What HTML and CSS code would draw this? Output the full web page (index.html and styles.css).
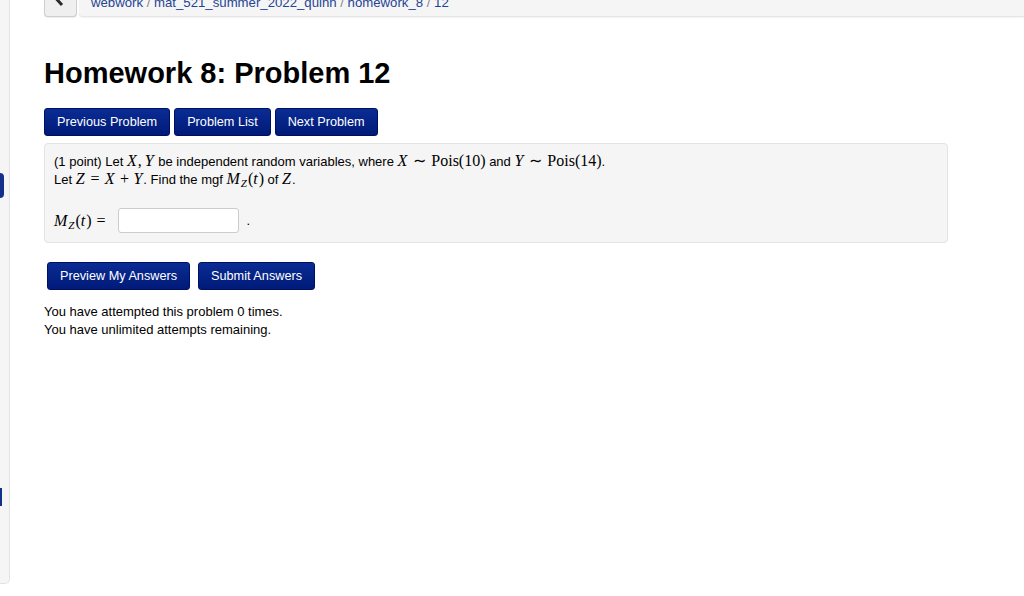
FILE: index.html
```html
<!DOCTYPE html>
<html>
<head>
<meta charset="utf-8">
<link rel="stylesheet" href="styles.css">
</head>
<body>
<div class="page">
  <aside class="sidebar">
    <span class="side-pill"></span>
    <span class="side-bar"></span>
  </aside>
  <main class="main">
    <div class="topbar">
      <div class="back">
        <svg class="chev" width="31" height="37" viewBox="0 0 31 37"><polyline points="16,6 8,15 16,24" fill="none" stroke="#2b2b2b" stroke-width="3" stroke-linecap="square"/></svg>
      </div>
      <nav class="crumbs">
        <a>webwork</a> / <a>mat_521_summer_2022_quinn</a> / <a>homework_8</a> / <a>12</a>
      </nav>
    </div>
    <h1 class="title">Homework 8: Problem 12</h1>
    <div class="navbtns">
      <button class="btn">Previous Problem</button>
      <button class="btn">Problem List</button>
      <button class="btn">Next Problem</button>
    </div>
    <div class="problem">
      <p class="line">(1 point) Let <span class="m"><i>X</i>,<span class="thin"></span><i>Y</i></span> be independent random variables, where <span class="m"><i>X</i><span class="rel">∼</span>Pois(10)</span> and <span class="m"><i>Y</i><span class="rel">∼</span>Pois(14)</span>.</p>
      <p class="line">Let <span class="m"><i>Z</i><span class="rel">=</span><i>X</i><span class="bin">+</span><i>Y</i></span>. Find the mgf <span class="m"><i>M</i><sub><i>Z</i></sub>(<i>t</i>)</span> of <span class="m"><i>Z</i></span>.</p>
      <div class="answer">
        <span class="m"><i>M</i><sub><i>Z</i></sub>(<i>t</i>)<span class="rel">=</span></span>
        <input class="field" type="text">
        <span class="dot">.</span>
      </div>
    </div>
    <div class="submitbtns">
      <button class="btn">Preview My Answers</button>
      <button class="btn">Submit Answers</button>
    </div>
    <p class="info">You have attempted this problem 0 times.<br>You have unlimited attempts remaining.</p>
  </main>
</div>
</body>
</html>
```
FILE: styles.css
```css
html, body {
  margin: 0;
  padding: 0;
  background: #fff;
  font-family: "Liberation Sans", Arial, sans-serif;
  color: #000;
  overflow: hidden;
}
.page {
  display: flex;
  align-items: flex-start;
}
.sidebar {
  position: relative;
  width: 9px;
  height: 583px;
  flex: none;
  background: #f5f5f5;
  border-right: 1px solid #e3e3e3;
  border-bottom: 1px solid #e3e3e3;
  border-bottom-right-radius: 5px;
}
.side-pill {
  position: absolute;
  left: 0;
  top: 173px;
  width: 4px;
  height: 25px;
  background: #13318b;
  border-radius: 0 12px 12px 0;
}
.side-bar {
  position: absolute;
  left: 0;
  top: 488px;
  width: 2px;
  height: 18px;
  background: #13318b;
}
.main {
  flex: 1;
  padding-left: 34px;
}
.topbar {
  display: flex;
  margin-top: -20px;
  height: 37px;
}
.back {
  width: 31px;
  flex: none;
  background: #efefef;
  border: 1px solid #cfcfcf;
  border-top: none;
  border-radius: 0 0 4px 4px;
  box-shadow: 0 1px 1px rgba(0,0,0,0.08);
  overflow: hidden;
}
.chev {
  display: block;
}
.crumbs {
  flex: 1;
  margin-left: 2px;
  background: #f5f5f5;
  border-bottom: 1px solid #e6e6e6;
  box-shadow: 0 1px 2px rgba(0,0,0,0.06);
  border-radius: 0 0 0 4px;
  padding-left: 12px;
  font-size: 13.2px;
  line-height: 13px;
  padding-top: 16px;
  color: #888;
  white-space: nowrap;
}
.crumbs a {
  color: #1f4493;
}
.title {
  margin: 39px 0 0 0;
  font-size: 29px;
  line-height: 34px;
  font-weight: bold;
}
.navbtns {
  display: flex;
  gap: 4px;
  margin-top: 18px;
}
.btn {
  height: 28px;
  padding: 0 12px;
  font-family: "Liberation Sans", Arial, sans-serif;
  font-size: 12.7px;
  color: #fff;
  background: linear-gradient(#0a2c94, #001a78);
  border: 1px solid #001060;
  border-radius: 3px;
}
.problem {
  margin-top: 7px;
  margin-right: 76px;
  background: #f5f5f5;
  border: 1px solid #e3e3e3;
  border-radius: 4px;
  padding: 8px 9px 9px 9px;
  font-size: 13px;
}
.line {
  margin: 0;
  line-height: 18px;
  height: 18px;
}
.m {
  font-family: "Liberation Serif", "Times New Roman", serif;
  font-size: 16px;
  line-height: 18px;
}
.m i {
  margin-right: 1px;
}
.thin {
  display: inline-block;
  width: 3px;
}
.rel {
  margin: 0 5px;
}
.bin {
  margin: 0 4.5px;
}
.m sub {
  font-size: 11px;
  vertical-align: -3px;
  line-height: 0;
}
.answer {
  display: flex;
  align-items: center;
  margin-top: 20px;
}
.answer .rel {
  margin-right: 0;
}
.field {
  box-sizing: border-box;
  width: 121px;
  height: 25px;
  margin: 0 0 0 12px;
  border: 1px solid #cccccc;
  border-radius: 3px;
  background: #fff;
  padding: 2px 3px;
}
.dot {
  margin-left: 8px;
  font-size: 13px;
}
.submitbtns {
  display: flex;
  gap: 8px;
  margin: 19px 0 0 3px;
}
.info {
  margin: 13px 0 0 0;
  font-size: 13px;
  line-height: 18px;
}
```
